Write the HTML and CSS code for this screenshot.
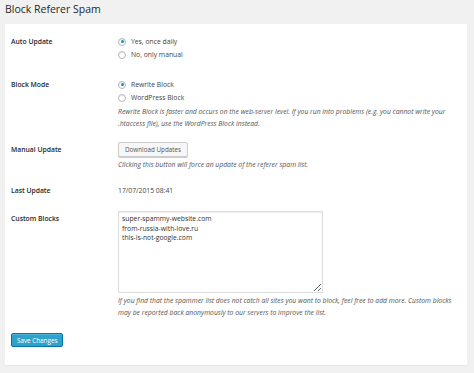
FILE: index.html
```html
<!DOCTYPE html>
<html lang="en">
<head>
  <meta charset="UTF-8">
  <title>Block Referer Spam</title>
  <link rel="stylesheet" href="styles.css">
</head>
<body>
  <h1>Block Referer Spam</h1>

  <form class="panel">
    <div class="row row-first">
      <div class="label">Auto Update</div>
      <div class="field">
        <div class="radio"><span class="dot checked"></span>Yes, once daily</div>
        <div class="radio"><span class="dot"></span>No, only manual</div>
      </div>
    </div>

    <div class="row row-mode">
      <div class="label">Block Mode</div>
      <div class="field">
        <div class="radio"><span class="dot checked"></span>Rewrite Block</div>
        <div class="radio"><span class="dot"></span>WordPress Block</div>
        <p class="desc">Rewrite Block is faster and occurs on the web-server level. If you run into problems (e.g. you cannot write your .htaccess file), use the WordPress Block instead.</p>
      </div>
    </div>

    <div class="row row-manual">
      <div class="label label-btn">Manual Update</div>
      <div class="field">
        <button type="button" class="btn">Download Updates</button>
        <p class="desc">Clicking this button will force an update of the referer spam list.</p>
      </div>
    </div>

    <div class="row">
      <div class="label">Last Update</div>
      <div class="field">17/07/2015 08:41</div>
    </div>

    <div class="row">
      <div class="label label-area">Custom Blocks</div>
      <div class="field">
        <textarea class="blocks">super-spammy-website.com
from-russia-with-love.ru
this-is-not-google.com</textarea>
        <p class="desc">If you find that the spammer list does not catch all sites you want to block, feel free to add more. Custom blocks may be reported back anonymously to our servers to improve the list.</p>
      </div>
    </div>

    <button type="button" class="btn-primary">Save Changes</button>
  </form>
</body>
</html>
```

FILE: styles.css
```css
body {
  margin: 0;
  background: #f1f1f1;
  font-family: 'Open Sans', sans-serif;
  color: #444;
  font-size: 6.8px;
  min-height: 373px;
}
h1 {
  margin: 0;
  padding: 2px 0 0 5px;
  height: 22px;
  font-size: 10.5px;
  font-weight: 400;
  color: #23282d;
}
.panel {
  margin: 0 7px 0 5px;
  background: #fff;
  padding: 11px 6px 18px;
  box-shadow: 0 1px 1px rgba(0, 0, 0, 0.04);
}
.row {
  display: grid;
  grid-template-columns: 107px 1fr;
  margin-bottom: 14px;
}
.row-first {
  margin-bottom: 17px;
}
.row-mode {
  margin-bottom: 12px;
}
.row-manual {
  margin-bottom: 13px;
}
.label {
  font-weight: 600;
  color: #23282d;
  line-height: 13px;
}
.label-btn {
  padding-top: 1px;
}
.label-area {
  padding-top: 1px;
}
.field {
  line-height: 13px;
}
.radio {
  display: flex;
  align-items: center;
  gap: 5px;
  height: 13px;
}
.dot {
  width: 6px;
  height: 6px;
  border: 1px solid #b4b9be;
  border-radius: 50%;
  box-shadow: inset 0 1px 1px rgba(0, 0, 0, 0.1);
  display: flex;
  align-items: center;
  justify-content: center;
}
.dot.checked::after {
  content: '';
  width: 3px;
  height: 3px;
  border-radius: 50%;
  background: #1e8cbe;
}
.desc {
  margin: 2px 0 0;
  font-style: italic;
  font-size: 6.8px;
  line-height: 12px;
  color: #555;
  max-width: 340px;
}
.btn {
  display: block;
  height: 15px;
  padding: 0 6px;
  font-family: inherit;
  font-size: 6.3px;
  color: #555;
  background: #f7f7f7;
  border: 1px solid #ccc;
  border-radius: 2px;
  box-shadow: 0 1px 0 #ccc;
}
.blocks {
  display: block;
  box-sizing: border-box;
  width: 205px;
  height: 82px;
  margin: 0;
  padding: 2px 3px;
  font-family: inherit;
  font-size: 6.8px;
  line-height: 9.7px;
  color: #333;
  border: 1px solid #ddd;
  box-shadow: inset 0 1px 2px rgba(0, 0, 0, 0.07);
}
.btn-primary {
  display: block;
  margin-top: 14px;
  height: 14px;
  padding: 0 5px;
  font-family: inherit;
  font-size: 6.3px;
  color: #fff;
  background: #2ea2cc;
  border: 1px solid #0074a2;
  border-radius: 2px;
  box-shadow: inset 0 1px 0 rgba(120, 200, 230, 0.5);
}
```
